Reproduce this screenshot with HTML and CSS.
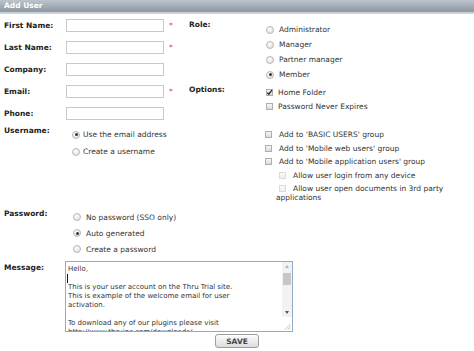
FILE: index.html
```html
<!DOCTYPE html>
<html lang="en">
<head>
    <meta charset="UTF-8">
    <title>Add User</title>
    <link rel="stylesheet" href="styles.css">
</head>
<body>

    <!-- Panel header -->
    <div class="panel-title">Add User</div>

    <div class="form">
        <div class="top">

            <!-- Left column: text fields + username -->
            <div class="col-left">
                <div class="field"><span class="lbl">First Name:</span><input class="txt" type="text"><span class="req">*</span></div>
                <div class="field"><span class="lbl">Last Name:</span><input class="txt" type="text"><span class="req">*</span></div>
                <div class="field"><span class="lbl">Company:</span><input class="txt" type="text"></div>
                <div class="field"><span class="lbl">Email:</span><input class="txt" type="text"><span class="req">*</span></div>
                <div class="field field-last"><span class="lbl">Phone:</span><input class="txt" type="text"></div>

                <div class="row user-row">
                    <span class="lbl">Username:</span>
                    <div class="choices user-choices">
                        <div class="choice"><span class="radio on"></span>Use the email address</div>
                        <div class="choice"><span class="radio"></span>Create a username</div>
                    </div>
                </div>
            </div>

            <!-- Right column: role, options, groups -->
            <div class="col-right">
                <div class="row role-row">
                    <span class="lbl lbl-right">Role:</span>
                    <div class="choices role-choices">
                        <div class="choice"><span class="radio"></span>Administrator</div>
                        <div class="choice"><span class="radio"></span>Manager</div>
                        <div class="choice"><span class="radio"></span>Partner manager</div>
                        <div class="choice"><span class="radio on"></span>Member</div>
                    </div>
                </div>

                <div class="row options-row">
                    <span class="lbl lbl-right">Options:</span>
                    <div class="choices options-choices">
                        <div class="choice"><span class="check on"><svg viewBox="0 0 7 7" width="7" height="7"><path d="M1.3 3.6 L2.8 5.2 L5.9 1.2" fill="none" stroke="#222" stroke-width="1.3"/></svg></span>Home Folder</div>
                        <div class="choice"><span class="check"></span>Password Never Expires</div>
                    </div>
                </div>

                <div class="groups">
                    <div class="group"><span class="check"></span>Add to 'BASIC USERS' group</div>
                    <div class="group"><span class="check"></span>Add to 'Mobile web users' group</div>
                    <div class="group"><span class="check"></span>Add to 'Mobile application users' group</div>
                    <div class="sub"><span class="check off"></span>Allow user login from any device</div>
                    <div class="sub sub-last"><span class="check off"></span>Allow user open documents in 3rd party applications</div>
                </div>
            </div>
        </div>

        <!-- Password -->
        <div class="row pass-row">
            <span class="lbl">Password:</span>
            <div class="choices pass-choices">
                <div class="choice"><span class="radio"></span>No password (SSO only)</div>
                <div class="choice"><span class="radio on"></span>Auto generated</div>
                <div class="choice"><span class="radio"></span>Create a password</div>
            </div>
        </div>

        <!-- Welcome message -->
        <div class="row msg-row">
            <span class="lbl msg-lbl">Message:</span>
            <div class="msg-box">
                <div class="msg-text">
                    <div>Hello,</div>
                    <div><span class="caret"></span></div>
                    <div>This is your user account on the Thru Trial site.</div>
                    <div>This is example of the welcome email for user</div>
                    <div>activation.</div>
                    <div>&nbsp;</div>
                    <div>To download any of our plugins please visit</div>
                    <div>http://www.thruinc.com/downloads/</div>
                </div>
                <div class="sb">
                    <div class="sb-btn"><span class="arrow-up"></span></div>
                    <div class="sb-thumb"></div>
                    <div class="sb-track"></div>
                    <div class="sb-btn"><span class="arrow-down"></span></div>
                    <div class="sb-corner">
                        <svg viewBox="0 0 7 7" width="7" height="7"><path d="M6.5 1 L1 6.5 M6.5 3.5 L3.5 6.5 M6.5 5.5 L5.5 6.5" stroke="#b5b5b5" stroke-width="0.8"/></svg>
                    </div>
                </div>
            </div>
        </div>

        <div class="actions">
            <button class="btn">SAVE</button>
        </div>
    </div>

</body>
</html>
```

FILE: styles.css
```css
/* Base */
* {
    box-sizing: border-box;
}

body {
    margin: 0;
    font-family: "DejaVu Sans", Verdana, sans-serif;
    font-size: 7.5px;
    color: #333;
    background: #fff;
}

/* Header bar */
.panel-title {
    height: 14px;
    line-height: 12px;
    padding-left: 4px;
    color: #fff;
    font-weight: bold;
    background: linear-gradient(#bcc4cc, #8d97a1);
    border-bottom: 2px solid #cdd2d7;
}

.form {
    padding-top: 5px;
}

.top {
    display: flex;
}

/* Left column */
.col-left {
    width: 200px;
    padding-left: 4px;
}

.field {
    display: flex;
    align-items: center;
    height: 13px;
    margin-bottom: 9px;
}

.field-last {
    margin-bottom: 6px;
}

.lbl {
    flex: none;
    width: 62px;
    line-height: 9px;
    font-weight: bold;
    color: #222;
}

.lbl-right {
    width: 77px;
}

.txt {
    width: 98px;
    height: 13px;
    margin: 0;
    padding: 0 2px;
    border: 1px solid #c9c9c9;
    font: inherit;
}

.req {
    margin-left: 5px;
    color: #e0406a;
}

/* Generic label + choice list rows */
.row {
    display: flex;
    align-items: flex-start;
}

.choice {
    display: flex;
    align-items: center;
    white-space: nowrap;
}

.radio {
    flex: none;
    width: 8px;
    height: 8px;
    border: 1px solid #b7b7b7;
    border-radius: 50%;
    background: radial-gradient(circle at 40% 35%, #fff, #d9d9d9);
}

.radio.on::after {
    content: "";
    display: block;
    width: 3px;
    height: 3px;
    margin: 1.5px;
    border-radius: 50%;
    background: #333;
}

.check {
    flex: none;
    display: inline-block;
    width: 7px;
    height: 7px;
    border: 1px solid #aeaeae;
    background: linear-gradient(#f7f7f7, #dadada);
    position: relative;
}

.check svg {
    position: absolute;
    left: -1px;
    top: -1px;
}

.check.off {
    border-color: #dcdcdc;
    background: linear-gradient(#fbfbfb, #ededed);
}

/* Username */
.user-choices {
    padding-left: 6px;
}

.user-choices .choice {
    height: 17px;
}

.user-choices .radio {
    margin-right: 3px;
}

/* Role */
.role-row {
    margin-top: 1px;
}

.role-choices {
    margin-top: 2px;
}

.role-choices .choice {
    height: 15px;
}

.role-choices .radio {
    margin-right: 5px;
}

/* Options */
.options-row {
    margin-top: 3px;
}

.options-choices .choice {
    height: 14px;
}

.options-choices .check {
    margin-right: 5px;
}

/* Groups */
.groups {
    margin-top: 17px;
    line-height: 9px;
}

.group {
    display: flex;
    align-items: center;
    padding-left: 76px;
    margin-bottom: 4.5px;
}

.group .check {
    margin-right: 7px;
}

.sub {
    padding-left: 87px;
    margin-bottom: 4.5px;
}

.sub .check {
    margin: 0 7px 0 3px;
    vertical-align: -1px;
}

.sub-last {
    margin-bottom: 0;
}

/* Password */
.pass-row {
    margin-top: 7px;
    padding-left: 4px;
}

.pass-choices {
    padding-left: 7px;
}

.pass-choices .choice {
    height: 16px;
}

.pass-choices .radio {
    margin-right: 5px;
}

/* Message box */
.msg-row {
    margin-top: 4px;
    padding-left: 4px;
}

.msg-lbl {
    width: 61px;
    padding-top: 2px;
}

.msg-box {
    display: flex;
    width: 228px;
    height: 71px;
    border: 1px solid #91a9cb;
}

.msg-text {
    flex: 1;
    padding: 2.5px 2px 0;
    overflow: hidden;
    font-size: 7px;
    line-height: 9px;
    white-space: nowrap;
    color: #333;
}

.caret {
    display: inline-block;
    width: 1px;
    height: 9px;
    margin-left: -1px;
    vertical-align: top;
    background: #111;
}

/* Fake scrollbar */
.sb {
    display: flex;
    flex-direction: column;
    width: 10px;
    background: #f2f2f2;
}

.sb-btn {
    display: flex;
    align-items: center;
    justify-content: center;
    height: 9px;
}

.arrow-up {
    border-left: 2.5px solid transparent;
    border-right: 2.5px solid transparent;
    border-bottom: 3px solid #b3b3b3;
}

.arrow-down {
    border-left: 2.5px solid transparent;
    border-right: 2.5px solid transparent;
    border-top: 3px solid #555;
}

.sb-thumb {
    height: 12px;
    margin: 2px 1px 0;
    background: #c7c7c7;
}

.sb-track {
    flex: 1;
}

.sb-corner {
    display: flex;
    align-items: flex-end;
    justify-content: flex-end;
    height: 14px;
    padding: 0 1px 1px 0;
    background: #fff;
}

/* Save button */
.actions {
    padding: 2px 0 0 215px;
}

.btn {
    width: 44px;
    height: 14px;
    padding: 0;
    border: 1px solid #9c9c9c;
    border-radius: 3px;
    background: linear-gradient(#fdfdfd, #dcdcdc);
    font-family: inherit;
    font-size: 7.5px;
    font-weight: bold;
    color: #444;
}
```
